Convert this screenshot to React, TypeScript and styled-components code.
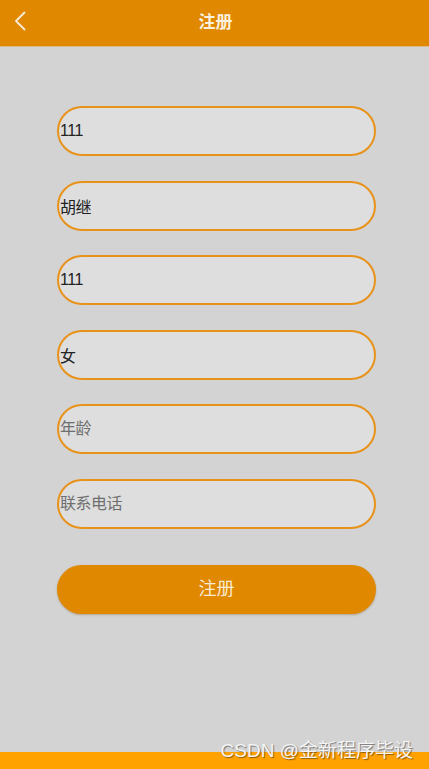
import styled, { createGlobalStyle } from "styled-components";

const GlobalStyle = createGlobalStyle`
  html, body {
    margin: 0;
    padding: 0;
    background: #d3d3d3;
  }
  body {
    font-family: "Liberation Sans", "Noto Sans CJK SC", sans-serif;
  }
`;

const fields = [
  { value: "111", placeholder: "用户名" },
  { value: "胡继", placeholder: "姓名" },
  { value: "111", placeholder: "密码" },
  { value: "女", placeholder: "性别" },
  { value: "", placeholder: "年龄" },
  { value: "", placeholder: "联系电话" },
];

export default function App() {
  return (
    <>
      <GlobalStyle />
      <Page>
        <Header>
          <BackButton aria-label="返回">
            <svg width="14" height="20" viewBox="0 0 14 20" fill="none">
              <path
                d="M11.5 1.5 L3 10 L11.5 18.5"
                stroke="#f6e7cf"
                strokeWidth="2"
                strokeLinecap="round"
                strokeLinejoin="round"
              />
            </svg>
          </BackButton>
          <Title>注册</Title>
        </Header>
        <Form>
          {fields.map((f, i) => (
            <Field
              key={i}
              defaultValue={f.value}
              placeholder={f.placeholder}
            />
          ))}
          <Submit type="button">注册</Submit>
        </Form>
        <BottomBar />
        <Watermark>CSDN @金新程序毕设</Watermark>
      </Page>
    </>
  );
}

const Page = styled.div`
  position: relative;
  min-height: 769px;
  display: flex;
  flex-direction: column;
  background: #d3d3d3;
`;

const Header = styled.header`
  height: 46px;
  display: flex;
  align-items: center;
  justify-content: center;
  position: relative;
  background: #df8800;
  border-bottom: 1px solid #dcb98a;
`;

const BackButton = styled.button`
  position: absolute;
  left: 13px;
  top: 11px;
  padding: 0;
  border: none;
  background: none;
  display: flex;
`;

const Title = styled.h1`
  margin: 0 0 5px 2px;
  font-size: 17px;
  font-weight: bold;
  color: #fbf0dd;
`;

const Form = styled.form`
  display: flex;
  flex-direction: column;
  gap: 24.6px;
  padding: 59px 53px 0 57px;
`;

const Field = styled.input`
  box-sizing: border-box;
  height: 50px;
  width: 319px;
  padding: 0 0 0 1px;
  border: 2px solid #e8921a;
  border-radius: 25px;
  background: #dedede;
  font-family: "Liberation Sans", "Noto Sans CJK SC", sans-serif;
  font-size: 16px;
  letter-spacing: -0.5px;
  color: #222;
  outline: none;

  &::placeholder {
    color: #6f6f6f;
  }
`;

const Submit = styled.button`
  margin-top: 11px;
  height: 49px;
  width: 319px;
  padding: 0 0 5px;
  border: none;
  border-radius: 25px;
  background: #df8800;
  box-shadow: 0 1px 2px rgba(120, 80, 20, 0.35);
  font-family: "Liberation Sans", "Noto Sans CJK SC", sans-serif;
  font-size: 18px;
  color: #f8ead2;
`;

const BottomBar = styled.div`
  margin-top: auto;
  height: 17px;
  background: #ffa200;
`;

const Watermark = styled.div`
  position: absolute;
  right: 16px;
  bottom: 7px;
  font-size: 19px;
  color: #f4f4f4;
  text-shadow: 1px 1px 1px rgba(0, 0, 0, 0.45);
`;
